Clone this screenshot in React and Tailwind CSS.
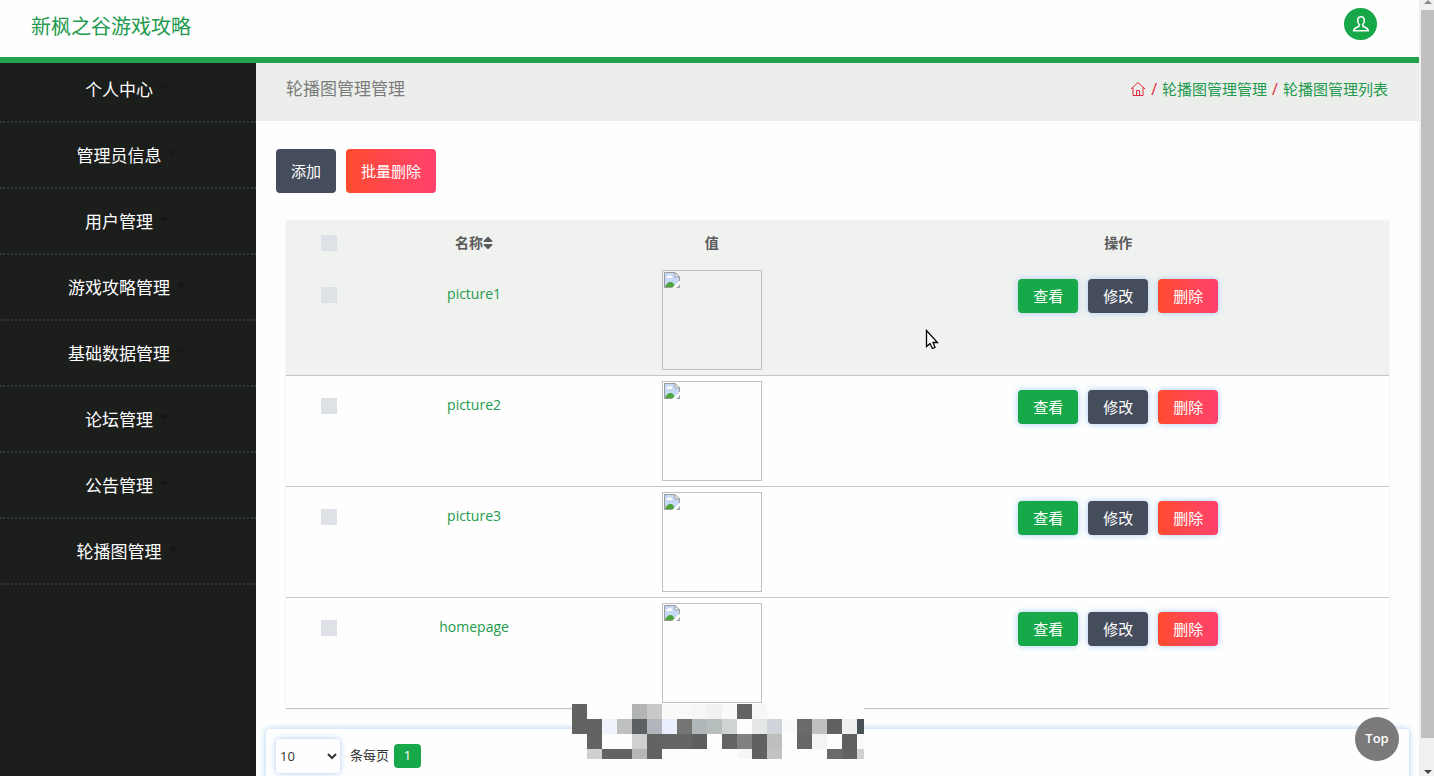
import React, { useState } from 'react';
import { FaSort, FaCaretDown } from 'react-icons/fa';

const menus = ['个人中心', '管理员信息', '用户管理', '游戏攻略管理', '基础数据管理', '论坛管理', '公告管理', '轮播图管理'];

const rows = ['picture1', 'picture2', 'picture3', 'homepage'];

const D = '#626462';
const W = '#fdfdfd';

// colours of the blurred strip, one row of blocks per line
const mosaic = [
  [D, W, W, W, '#b3b5b3', '#c8c9c8', '#f9f9f9', '#f9f9f9', '#f5f6f5', '#f0f1f0', '#f9f9f9', D, '#f7f7f7', W, W, W, W, W, W, W],
  [D, D, '#f0f3fc', '#bfc1bf', '#5c6062', '#b1b5bc', '#e9effc', '#737673', '#b1b8ba', '#b6bebe', '#d0d3d3', W, '#e6e8e6', '#cfd3da', '#f8fafc', '#6a6c6a', '#bfc1bf', '#606260', '#eef0ee', '#485256'],
  [W, D, W, W, '#cfd0cf', D, '#646664', '#646664', '#5e605e', W, '#636563', '#808280', '#606260', '#bdbfbd', W, '#666866', '#f3f4f3', W, '#5f615f', '#f9f9f9'],
  [W, '#cfd0cf', D, D, '#b5b6b5', D, W, W, W, W, W, '#f7f7f7', '#606260', '#c2c4c2', W, W, W, '#6a6c6a', '#606260', '#d0d2d0'],
];

const Header = () => (
  <header className="flex h-[63px] items-start justify-between border-b-6 border-[#22a14f] bg-[#fefefe] pr-[42px] pl-[31px]">
    <h1 className="pt-[11px] text-[20px] leading-8 text-[#229a4d]">新枫之谷游戏攻略</h1>
    <button aria-label="个人中心" className="mt-2 flex h-8 w-[33px] items-center justify-center rounded-full bg-[#17a84a] text-white">
      <svg viewBox="0 0 18 18" className="h-[18px] w-[18px]" fill="none" stroke="currentColor" strokeWidth="1.600">
        <path d="M9 1.800c-2.100 0-3.300 1.400-3.300 3.700 0 1.900.7 3.300 1.700 4.100 0 1.500-.5 2-1.600 2.300-2.400.7-3.800 1.600-4.100 3.900h14.600c-.3-2.300-1.700-3.200-4.100-3.900-1.100-.3-1.600-.8-1.600-2.300 1-.8 1.700-2.200 1.700-4.100C12.300 3.200 11.100 1.800 9 1.800z" />
      </svg>
    </button>
  </header>
);

const Sidebar = () => (
  <nav className="w-64 shrink-0 bg-[#1c1e1c]">
    <ul>
      {menus.map((menu, index) => (
        <li key={menu} className={`border-b-2 border-dotted border-[#31343b] ${index === 0 ? 'h-[60px]' : 'h-[66px]'}`}>
          <a
            href="#"
            className={`flex items-start justify-center gap-1 text-[17px] leading-6 text-white ${index === 0 ? 'pt-[15px]' : 'pt-[21px]'}`}
          >
            {menu}
            <FaCaretDown className="mt-0.5 h-3.5 w-3.5 text-[#151715]" />
          </a>
        </li>
      ))}
    </ul>
  </nav>
);

const Breadcrumb = () => (
  <div className="flex h-[58px] items-start justify-between bg-[#eceeec] pt-3.5 pr-[31px] pl-[30px]">
    <h2 className="text-[17px] leading-6 text-[#7b7b7b]">轮播图管理管理</h2>
    <div className="flex items-center gap-[5px] text-[15px] leading-6 text-[#e22a3a]">
      <a href="#" aria-label="首页">
        <svg viewBox="0 0 16 16" className="h-4 w-4" fill="none" stroke="currentColor">
          <path d="M1 8 8 1.500 15 8M3 6.500V14.500H13V6.500M6.500 14.500V9.500H9.500V14.500" />
        </svg>
      </a>
      <span className="text-[16px]">/</span>
      <a href="#" className="text-[#229a4d]">轮播图管理管理</a>
      <span className="text-[16px]">/</span>
      <a href="#" className="text-[#229a4d]">轮播图管理列表</a>
    </div>
  </div>
);

const BrokenImage = () => (
  <div className="mx-auto h-[100px] w-[100px] border border-[#c0c0c0] p-px">
    <svg viewBox="0 0 16 16" className="h-4 w-4">
      <path d="M.5.500H11L15.500 5V15.500H.5z" fill="#c5d8f5" stroke="#9a9a9a" />
      <path d="M2.500 5.500c0-1 1-2 2-1.500 1-1.500 3-1 3 .5 1 0 1.500 1.500.5 1.500H3.500c-.500 0-1 0-1-.5z" fill="#fff" />
      <path d="M1 15c1-3 3-5 5.500-5S10 12 11 15z" fill="#4da53b" />
      <path d="M11 .5V5h4.500z" fill="#fff" stroke="#9a9a9a" />
      <path d="M8 16 16 8.500V12L12 16z" fill="#fff" />
    </svg>
  </div>
);

const actionButton = 'h-[34px] w-[60px] rounded-sm text-[15px] text-white shadow-[0_0_6px_#a9ccf5]';

const PictureTable = () => (
  <table className="w-full table-fixed border-collapse text-center text-[14px] leading-5 shadow-[0_0_2px_#e6e8e6]">
    <colgroup>
      <col className="w-[7.8%]" />
      <col className="w-[18.5%]" />
      <col className="w-[24.6%]" />
      <col />
    </colgroup>
    <thead className="bg-[#f0f2f0] text-[#5a5a5a]">
      <tr className="h-11">
        <th>
          <input type="checkbox" aria-label="全选" className="block mx-auto h-4 w-4 appearance-none bg-[#dee2e6]" />
        </th>
        <th>
          <button className="inline-flex items-center font-bold">
            名称<FaSort className="h-4 w-2.5" />
          </button>
        </th>
        <th>值</th>
        <th>操作</th>
      </tr>
    </thead>
    <tbody>
      {rows.map((name, index) => (
        <tr key={name} className={`border-b border-[#c4c6c4] align-top ${index === 0 ? 'bg-[#f0f2f0]' : ''}`}>
          <td className="pt-[22px]">
            <input type="checkbox" aria-label={name} className="block mx-auto h-4 w-4 appearance-none bg-[#dee2e6]" />
          </td>
          <td className="pt-[19px] text-[14px] text-[#229a4d]">{name}</td>
          <td className="py-[5px]">
            <BrokenImage />
          </td>
          <td className="pt-3.5">
            <div className="flex justify-center gap-2.5">
              <button className={`${actionButton} bg-[#17a84a]`}>查看</button>
              <button className={`${actionButton} bg-[#454d5d]`}>修改</button>
              <button className={`${actionButton} bg-linear-to-r from-[#ff4b2b] to-[#ff416c]`}>删除</button>
            </div>
          </td>
        </tr>
      ))}
    </tbody>
  </table>
);

const Pager = () => {
  const [pageSize, setPageSize] = useState('10');

  return (
    <div className="mx-2.5 mt-5 flex h-20 items-start rounded-sm bg-[#fefefe] p-2.5 text-[13px] text-[#333] shadow-[0_0_6px_#a9ccf5]">
      <label className="flex items-center gap-2.5">
        <select
          value={pageSize}
          onChange={(e) => setPageSize(e.target.value)}
          className="h-[34px] w-16 rounded-sm bg-[#fefefe] text-[13px] shadow-[0_0_6px_#a9ccf5]"
        >
          <option>10</option>
          <option>25</option>
          <option>50</option>
        </select>
        条每页
      </label>
      <button className="mt-[5px] ml-[5px] h-6 w-[27px] rounded-sm bg-[#17a84a] text-white">1</button>
    </div>
  );
};

const Mosaic = () => (
  <svg className="absolute top-[704px] left-[572px] h-[55px] w-[292px]" viewBox="0 0 292 55" shapeRendering="crispEdges">
    {mosaic.map((line, y) =>
      line.map((color, x) => <rect key={`${x}-${y}`} x={x * 15} y={y * 15} width="15" height="15" fill={color} />)
    )}
  </svg>
);

const Scrollbar = () => (
  <div className="flex w-[15px] shrink-0 flex-col items-center justify-between bg-[#f0f1f0] pl-0.5">
    <svg viewBox="0 0 8 10" className="h-2.5 w-2 shrink-0"><path d="M0 4 4 0l4 4z" fill="#8a8a8a" /></svg>
    <div className="h-[728px] w-full bg-[#bfc0bf]" />
    <div className="flex flex-1 items-end pb-0.5">
      <svg viewBox="0 0 8 4" className="h-1 w-2"><path d="M0 0h8L4 4z" fill="#444" /></svg>
    </div>
  </div>
);

const App = () => (
  <div className="relative flex h-screen overflow-hidden bg-[#fdfefd] font-['Open_Sans','Noto_Sans_CJK_SC',sans-serif]">
    <div className="flex min-w-0 flex-1 flex-col">
      <Header />
      <div className="flex min-h-0 flex-1">
        <Sidebar />
        <main className="min-w-0 flex-1 overflow-hidden">
          <Breadcrumb />
          <div className="flex gap-2.5 px-5 py-7 text-[15px] text-white">
            <button className="h-11 rounded-sm bg-[#454d5d] px-[15px]">添加</button>
            <button className="h-11 rounded-sm bg-linear-to-r from-[#ff4b2b] to-[#ff416c] px-[15px]">批量删除</button>
          </div>
          <div className="px-[30px]">
            <PictureTable />
          </div>
          <Pager />
        </main>
      </div>
    </div>
    <Scrollbar />

    <Mosaic />
    <button className="absolute right-[35px] bottom-[15px] h-11 w-11 rounded-full bg-[#7b797a] text-[13px] font-semibold text-white">Top</button>
    {/* mouse pointer */}
    <svg className="absolute top-[329px] left-[925px] h-[21px] w-[14px]" viewBox="0 0 14 21">
      <path d="M1.500 1.500V17.500L5 14.500 7.500 19.500 10 18.500 8 13.500H12.500z" fill="#fff" stroke="#000" strokeWidth="1.300" />
    </svg>
  </div>
);

export default App;
